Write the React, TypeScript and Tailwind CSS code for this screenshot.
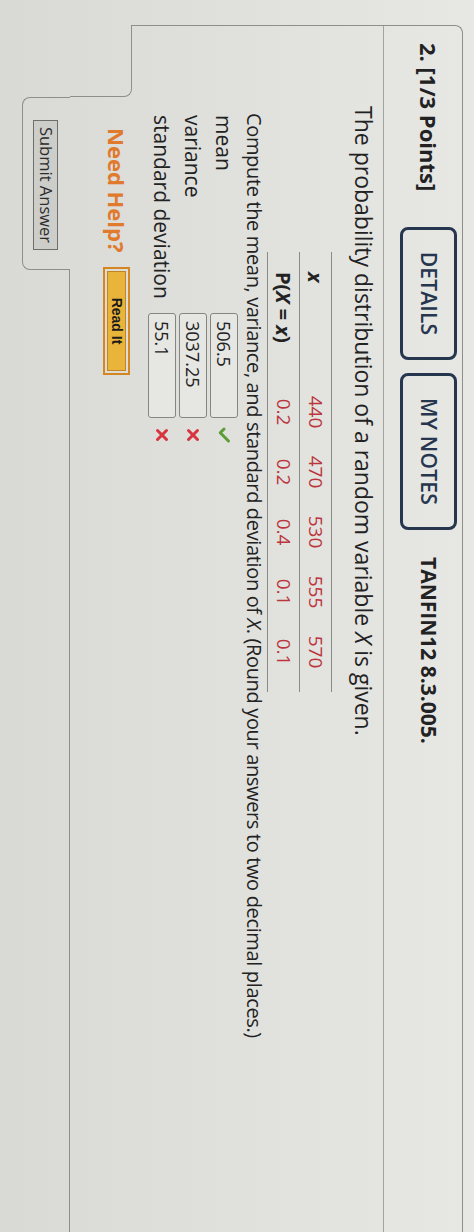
import { Check, X } from "lucide-react";

const values = ["440", "470", "530", "555", "570"];
const probs = ["0.2", "0.2", "0.4", "0.1", "0.1"];

const answers = [
  { label: "mean", value: "506.5", correct: true },
  { label: "variance", value: "3037.25", correct: false },
  { label: "standard deviation", value: "55.1", correct: false },
];

function HeaderButton({ label, width }: { label: string; width: string }) {
  return (
    <div
      className={`${width} flex h-[57px] items-center justify-center rounded-[8px] border-[3px] border-[#26364f] text-[21px] font-semibold tracking-[0.01em] text-[#26364f]`}
    >
      {label}
    </div>
  );
}

export default function App() {
  return (
    <div className="h-[1232px] w-[474px] overflow-hidden bg-[#dededb]">
      {/* the photo is turned a quarter turn clockwise, so the page is laid out landscape and rotated */}
      <div className="h-[474px] w-[1232px] origin-top-left translate-x-[474px] rotate-90 bg-linear-to-b from-[#e7e7e4] to-[#d9d9d6] font-['Open_Sans',sans-serif] text-[#222222]">
        <div className="pt-[11px]">
          <div className="ml-[25px] rounded-tl-[8px] border-l border-t border-[#8e8e8b]">
            <div className="flex items-center border-b border-[#a3a3a0] pb-[16px] pl-[17px] pt-[5px]">
              <span className="w-[184px] text-[22px] font-bold">2. [1/3 Points]</span>
              <HeaderButton label="DETAILS" width="w-[133px]" />
              <div className="ml-[13px]">
                <HeaderButton label="MY NOTES" width="w-[157px]" />
              </div>
              <span className="ml-[27px] text-[21px] font-bold">TANFIN12 8.3.005.</span>
            </div>

            <p className="mt-[7px] pl-[80px] text-[23px] leading-[24px]">
              The probability distribution of a random variable <i>X</i> is given.
            </p>

            <div className="ml-[226px] mt-[20px] w-[440px] border-t border-[#8a8a87]">
              <div className="grid h-[32px] grid-cols-[130px_repeat(5,60px)] items-center border-b border-[#8a8a87]">
                <span className="pl-[20px] text-[20px] font-bold">
                  <i>x</i>
                </span>
                {values.map((v) => (
                  <span key={v} className="text-center text-[19px] text-[#bb363c]">
                    {v}
                  </span>
                ))}
              </div>
              <div className="grid h-[32px] grid-cols-[130px_repeat(5,60px)] items-center border-b border-[#8a8a87]">
                <span className="pl-[20px] text-[20px] font-bold">
                  P(<i>X</i> = <i>x</i>)
                </span>
                {probs.map((p, i) => (
                  <span key={i} className="text-center text-[19px] text-[#bb363c]">
                    {p}
                  </span>
                ))}
              </div>
            </div>

            <p className="mt-[1px] pl-[87px] text-[20px] leading-[24px] tracking-[-0.35px]">
              Compute the mean, variance, and standard deviation of <i>X</i>. (Round your
              answers to two decimal places.)
            </p>

            <div className="mt-[4px] flex flex-col gap-[3px] pb-[16px] pl-[89px]">
              {answers.map((a) => (
                <div key={a.label} className="flex h-[28px] items-center">
                  <span className="w-[198px] text-[21px] leading-[24px]">{a.label}</span>
                  <div className="flex h-[28px] w-[105px] items-center rounded-[3px] border border-[#858582] bg-[#e6e6e3] pl-[7px] text-[18px]">
                    {a.value}
                  </div>
                  <span className="ml-[8px]">
                    {a.correct ? (
                      <Check size={18} strokeWidth={4} className="text-[#5b9d35]" />
                    ) : (
                      <X size={18} strokeWidth={4} className="text-[#d8343f]" />
                    )}
                  </span>
                </div>
              ))}
            </div>
          </div>

          <div className="ml-[25px] grid grid-cols-[72px_173px_1fr] grid-rows-[62px_48px]">
            <div className="col-start-1 row-start-1 rounded-tr-[8px] border-r border-t border-[#8e8e8b]" />
            <div className="col-span-2 col-start-2 row-start-1 flex items-start pl-[31px] pt-[2px]">
              <span className="flex h-[27px] w-[139px] items-center text-[22px] font-bold text-[#e07a2c]">
                Need Help?
              </span>
              <div className="flex h-[27px] w-[108px] border-2 border-[#d6861f] p-[2px]">
                <div className="flex flex-1 items-center justify-center border border-[#c68323] bg-[#e9b43a] font-['Liberation_Sans',sans-serif] text-[14px] font-bold text-[#1b1b1b]">
                  Read It
                </div>
              </div>
            </div>
            <div className="col-start-2 row-start-2 rounded-b-[8px] border-b border-l border-r border-[#8e8e8b] pl-[22px] pt-[12px]">
              <div className="flex h-[25px] w-[130px] items-center justify-center border border-[#6e6e6b] bg-[#cdcdca] text-[16.5px] text-[#2c2c2c]">
                Submit Answer
              </div>
            </div>
            <div className="col-start-3 row-start-2 border-t border-[#8e8e8b]" />
          </div>
        </div>
      </div>
    </div>
  );
}
